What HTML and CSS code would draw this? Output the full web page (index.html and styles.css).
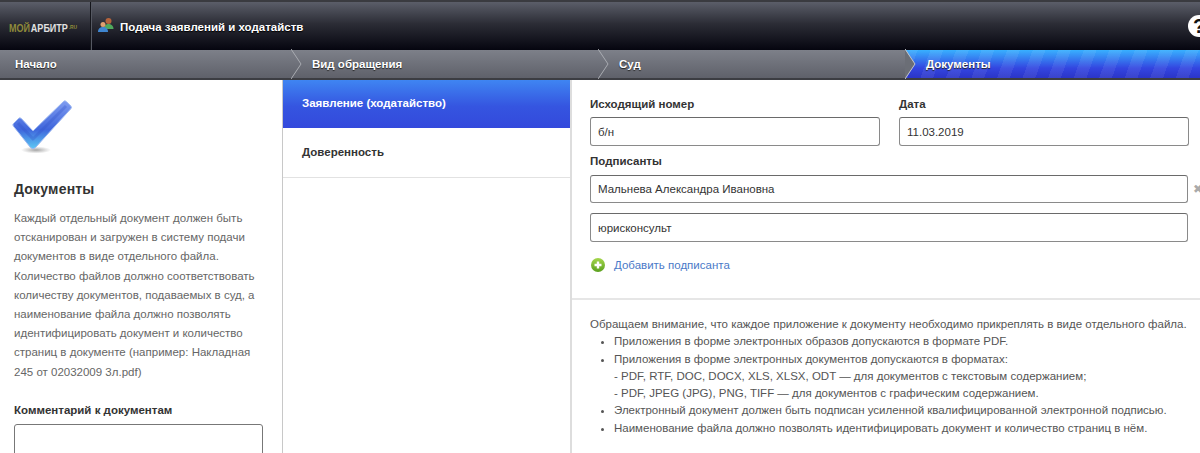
FILE: index.html
```html
<!DOCTYPE html>
<html lang="ru">
<head>
<meta charset="utf-8">
<title>Подача заявлений и ходатайств</title>
<link rel="stylesheet" href="styles.css">
</head>
<body>
<header class="topbar">
  <div class="logo"><div class="logo-mark"><span class="logo-a">МОЙ</span><span class="logo-b">АРБИТР</span><span class="logo-c">.RU</span></div></div>
  <div class="app">
    <svg class="app-icon" width="16" height="16" viewBox="0 0 16 16"><circle cx="10.500" cy="4" r="3" fill="#b5643c"/><path d="M6 12c0-3.500 2-5 4.500-5s5 1.500 5 5z" fill="#4fa85c"/><circle cx="5" cy="7.500" r="2.500" fill="#e0a070"/><path d="M0 15c0-3.500 2-5 5-5s5 1.500 5 5z" fill="#3f86d0"/></svg>
    <span class="app-title">Подача заявлений и ходатайств</span>
  </div>
  <div class="help">?</div>
</header>
<nav class="steps">
  <div class="step step-1">Начало</div>
  <div class="step step-2"><svg class="chev" width="12" height="30" viewBox="0 0 12 30"><path d="M0 0l10 15L0 30" fill="none" stroke="#a9acb2" stroke-width="1"/></svg>Вид обращения</div>
  <div class="step step-3"><svg class="chev" width="12" height="30" viewBox="0 0 12 30"><path d="M0 0l10 15L0 30" fill="none" stroke="#a9acb2" stroke-width="1"/></svg>Суд</div>
  <div class="step step-4"><svg class="chev" width="12" height="30" viewBox="0 0 12 30"><path d="M0 0l10 15L0 30z" fill="#6b6e76"/><path d="M0 0l10 15L0 30" fill="none" stroke="#c4c7cc" stroke-width="1"/></svg>Документы</div>
</nav>
<main class="layout">
  <aside class="side">
    <svg class="check" width="64" height="56" viewBox="0 0 64 56">
      <defs>
        <linearGradient id="cg" x1="0" y1="0" x2="0" y2="1"><stop offset="0" stop-color="#7f9cf0"/><stop offset=".6" stop-color="#3f66dc"/><stop offset="1" stop-color="#5cc8f4"/></linearGradient>
        <radialGradient id="sg"><stop offset="0" stop-color="#666" stop-opacity=".6"/><stop offset="1" stop-color="#777" stop-opacity="0"/></radialGradient>
      </defs>
      <ellipse cx="24" cy="52" rx="15" ry="3.500" fill="url(#sg)"/>
      <path d="M1.500 25.500l5-5a2 2 0 0 1 2.800 0L21 33 51.500 3.500a2 2 0 0 1 2.800 0l4.500 4.500a2 2 0 0 1 0 2.800L23.500 49.500a3.500 3.500 0 0 1-5 0L1.500 28.300a2 2 0 0 1 0-2.800z" fill="url(#cg)" stroke="#9db8f2" stroke-width="1"/>
      <path d="M6 25l15 16L54 8" fill="none" stroke="#2f4fc8" stroke-opacity=".3" stroke-width="3" stroke-linejoin="round"/>
    </svg>
    <h2 class="side-title">Документы</h2>
    <p class="side-text">Каждый отдельный документ должен быть отсканирован и загружен в систему подачи документов в виде отдельного файла. Количество файлов должно соответствовать количеству документов, подаваемых в суд, а наименование файла должно позволять идентифицировать документ и количество страниц в документе (например: Накладная 245 от 02032009 3л.pdf)</p>
    <label class="side-label">Комментарий к документам</label>
    <div class="textarea"></div>
  </aside>
  <section class="docs">
    <div class="doc doc-on">Заявление (ходатайство)</div>
    <div class="doc">Доверенность</div>
  </section>
  <section class="form">
    <div class="fields">
      <div class="row">
        <div class="col-num"><label class="label">Исходящий номер</label><div class="input">б/н</div></div>
        <div class="col-date"><label class="label">Дата</label><div class="input">11.03.2019</div></div>
      </div>
      <label class="label label-sign">Подписанты</label>
      <div class="sign-row"><div class="input input-wide input-sign">Мальнева Александра Ивановна</div><span class="remove">✖</span></div>
      <div class="input input-wide input-next">юрисконсульт</div>
      <div class="add">
        <svg width="16" height="16" viewBox="0 0 16 16"><defs><linearGradient id="ag" x1="0" y1="0" x2="0" y2="1"><stop offset="0" stop-color="#a5d64c"/><stop offset="1" stop-color="#5aa01e"/></linearGradient></defs><circle cx="8" cy="8" r="7" fill="url(#ag)"/><path d="M8 4.500v7M4.500 8h7" stroke="#fff" stroke-width="2.400"/></svg>
        <a class="add-link">Добавить подписанта</a>
      </div>
    </div>
    <div class="notes">
      <p class="notes-lead">Обращаем внимание, что каждое приложение к документу необходимо прикреплять в виде отдельного файла.</p>
      <ul class="notes-list">
        <li>Приложения в форме электронных образов допускаются в формате PDF.</li>
        <li>Приложения в форме электронных документов допускаются в форматах:<br>- PDF, RTF, DOC, DOCX, XLS, XLSX, ODT — для документов с текстовым содержанием;<br>- PDF, JPEG (JPG), PNG, TIFF — для документов с графическим содержанием.</li>
        <li>Электронный документ должен быть подписан усиленной квалифицированной электронной подписью.</li>
        <li>Наименование файла должно позволять идентифицировать документ и количество страниц в нём.</li>
      </ul>
    </div>
  </section>
</main>
</body>
</html>
```
FILE: styles.css
```css
* { box-sizing: border-box; }
html, body { margin: 0; height: 453px; overflow: hidden; background: #fff; }
body { font-family: "Liberation Sans", Arial, sans-serif; font-size: 11.5px; color: #333; }

.topbar { height: 50px; display: flex; align-items: stretch; border-top: 2px solid #3a3b40; background: linear-gradient(#5b5e69, #2c2d36 45%, #05050f); position: relative; overflow: hidden; }
.logo { width: 91px; flex: none; border-right: 1px solid #14151b; box-shadow: 1px 0 0 #555862; padding: 19px 0 0 9px; }
.logo-mark { font-weight: bold; font-size: 11px; line-height: 12px; white-space: nowrap; transform: scaleX(.82); transform-origin: 0 0; }
.logo-a { color: #8f8a3a; }
.logo-b { color: #e0e0e0; margin-left: 1px; }
.logo-c { color: #8f8a3a; font-size: 6px; vertical-align: 3px; margin-left: 1px; }
.app { display: flex; align-items: center; padding-left: 6px; gap: 6px; margin-left: 1px; flex: 1; }
.app-icon { margin-top: -3px; }
.app-title { color: #fff; font-weight: bold; font-size: 11.5px; margin-top: 2px; text-shadow: 0 1px 1px #000; }
.help { position: absolute; right: -10px; top: 13px; width: 22px; height: 22px; border-radius: 50%; background: #fff; color: #111; font-weight: bold; font-size: 20px; line-height: 22px; text-align: center; }

.steps { height: 30px; display: flex; border-bottom: 2px solid #3c3d42; background: linear-gradient(#7d8089, #5f616a); color: #fff; font-weight: bold; font-size: 11.5px; line-height: 28px; text-shadow: 0 1px 1px #222; }
.step { position: relative; white-space: nowrap; }
.step-1 { width: 291px; padding-left: 15px; }
.step-2 { width: 307px; padding-left: 21px; }
.step-3 { width: 307px; padding-left: 21px; }
.step-4 { flex: 1; padding-left: 21px; background: repeating-linear-gradient(110deg, rgba(255,255,255,.07) 0 12px, rgba(255,255,255,0) 12px 24px), linear-gradient(#38b0ff, #3345e0 65%, #2b35c8); }
.chev { position: absolute; left: 0; top: -1px; }

.layout { display: flex; height: 373px; }
.side { width: 283px; flex: none; border-right: 1px solid #c8c8c8; padding: 18px 14px 0 14px; overflow: hidden; }
.check { display: block; margin-left: -2px; }
.side-title { margin: 26px 0 0; font-size: 14px; line-height: 18px; font-weight: bold; color: #333; letter-spacing: .2px; }
.side-text { margin: 11px 0 0; line-height: 19.2px; color: #666; }
.side-label { display: block; margin-top: 20px; font-weight: bold; line-height: 16px; color: #333; }
.textarea { margin-top: 6px; width: 249px; height: 60px; border: 1px solid #777; border-radius: 3px; }

.docs { width: 289px; flex: none; border-right: 2px solid #ddd; }
.doc { height: 50px; border-bottom: 1px solid #e2e2e2; padding-left: 19px; line-height: 49px; font-weight: bold; color: #333; }
.doc-on { height: 48px; line-height: 47px; color: #fff; border-bottom: 0; background: linear-gradient(#3f85f2, #3555e0 55%, #3349dc); }

.form { flex: 1; min-width: 0; }
.fields { height: 220px; border-bottom: 2px solid #e6e6e6; padding: 16px 0 0 18px; }
.row { display: flex; gap: 19px; }
.col-num { width: 290px; }
.col-date { width: 290px; }
.label { display: block; font-weight: bold; line-height: 16px; color: #333; }
.input { margin-top: 5px; height: 29px; border: 1px solid #8a8a8a; border-top-color: #6a6a6a; border-radius: 3px; padding-left: 7px; line-height: 28px; color: #333; background: #fff; }
.label-sign { margin-top: 7px; }
.sign-row { display: flex; align-items: center; margin-top: 6px; }
.sign-row .input { margin-top: 0; }
.input-sign { height: 28px; line-height: 26px; }
.input-wide { width: 598px; flex: none; }
.input-next { margin-top: 10px; }
.remove { margin-left: 5px; color: #aaa; font-size: 12px; font-family: "DejaVu Sans", sans-serif; }
.add { display: flex; align-items: center; gap: 8px; margin-top: 15px; }
.add-link { color: #4a79c8; }

.notes { padding: 16px 0 0 18px; line-height: 17.25px; color: #555; }
.notes-lead { margin: 0; white-space: nowrap; }
.notes-list { margin: 0; padding: 0 0 0 24px; }
.notes-list li { white-space: nowrap; }
```
